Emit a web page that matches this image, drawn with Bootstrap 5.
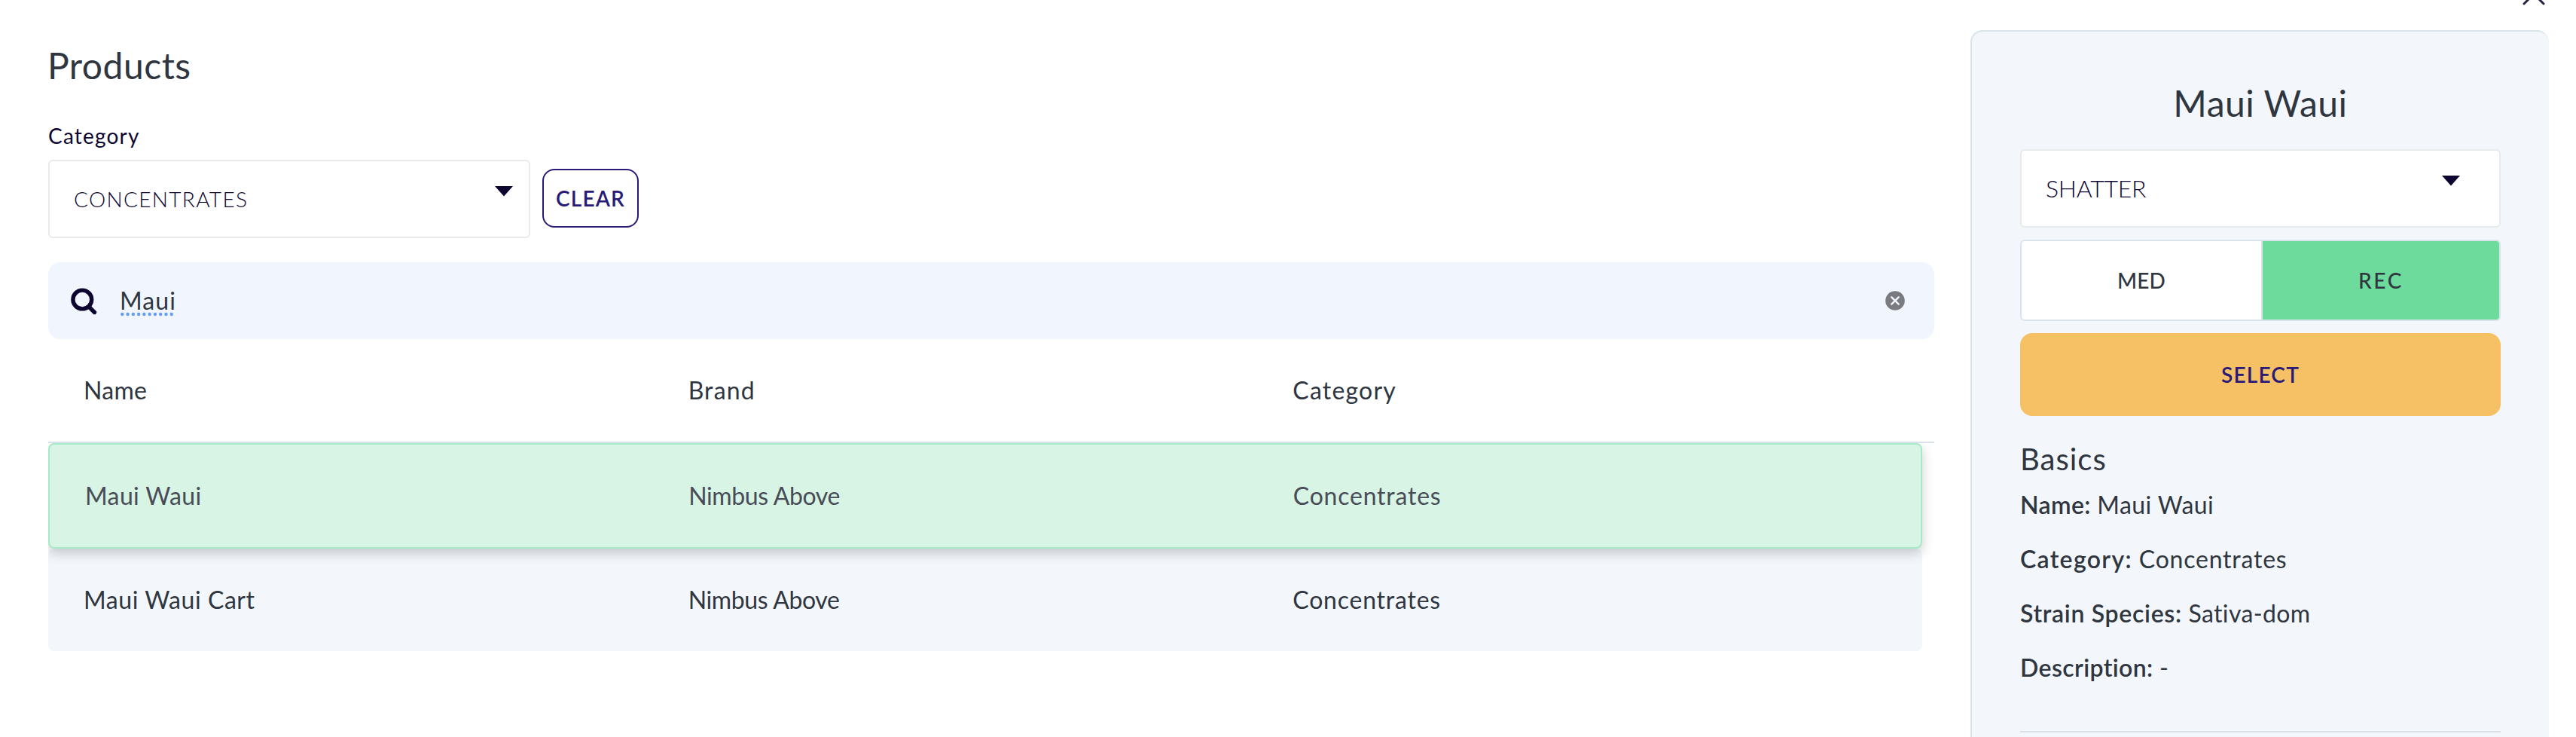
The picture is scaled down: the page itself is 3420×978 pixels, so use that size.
<!DOCTYPE html>
<html lang="en">
<head>
<meta charset="utf-8">
<title>Products</title>
<link href="https://cdn.jsdelivr.net/npm/bootstrap@5.3.0/dist/css/bootstrap.min.css" rel="stylesheet">
<style>
  body { font-family: Lato, sans-serif; font-size: 32px; color: #2f3640; background: #fff; height: 978px; overflow: hidden; }
  .page { padding: 0 36px 0 64px; gap: 48px; height: 978px; }
  .main-panel { width: 2504px; padding-top: 59px; }
  .panel-title { font-size: 48px; line-height: 56px; font-weight: 400; margin: 0 0 48px -1px; letter-spacing: .5px; }
  .field-label { font-size: 28px; line-height: 34px; letter-spacing: 1.2px; color: #0e0630; margin-bottom: 15px; display: block; }
  .picker { height: 104px; background: #fff; border: 2px solid #e8e9eb; border-radius: 6px; color: #0e0630; font-weight: 300; }
  .picker-cat { width: 640px; font-size: 28px; letter-spacing: 1.34px; padding: 0 21px 0 32px; }
  .picker-type { letter-spacing: -.27px; padding: 0 52px 0 32px; }
  .picker svg { margin-bottom: 20px; }
  .btn-clear { width: 128px; height: 78px; border: 2px solid #2a1a78; border-radius: 16px; color: #2a1a78; font-size: 28px; font-weight: 600; letter-spacing: 1.15px; line-height: 1; padding: 0; margin-bottom: 2px; }
  .search-bar { height: 102px; margin-top: 32px; border-radius: 16px; background: #f1f6fe; padding: 0 39px 0 28px; }
  .query { line-height: 42px; letter-spacing: 1.1px; margin-left: 25px; padding: 0 0 0 3px; margin-right: auto; position: relative; }
  .query svg { position: absolute; left: 4px; top: 36px; }
  .trow { display: grid; grid-template-columns: 802.67px 802.67px 1fr; align-items: center; padding: 0 47px; }
  .trow-head { height: 138px; border-bottom: 2px solid #d9e1e9; }
  .trow-item { width: 2488px; border-radius: 8px; }
  .trow-on { height: 140px; border: 2px solid #a6eac8; background: #d7f4e4; color: #484c57; box-shadow: 0 6px 16px rgba(0,0,0,.2); z-index: 1; position: relative; clip-path: inset(0 -30px -30px 0); }
  .trow-on > span + span { margin-left: -1.5px; }
  .trow-off { height: 136px; background: #f3f7fc; }
  .ls-name { letter-spacing: .27px; }
  .ls-brand { letter-spacing: 1.13px; }
  .ls-cat { letter-spacing: 1.21px; }
  .ls-maui { letter-spacing: .38px; }
  .ls-cart { letter-spacing: .56px; }
  .ls-nimbus { letter-spacing: -.35px; }
  .ls-conc { letter-spacing: .78px; }
  .ls-strain { letter-spacing: .69px; }
  .ls-catb { letter-spacing: 1.3px; }
  .detail { width: 768px; margin-top: 40px; height: 938px; background: #f3f7fc; border: 2px solid #dae2ea; border-right: 0; border-bottom: 0; border-radius: 16px 16px 0 0; padding: 67px 64px 0 64px; }
  .detail-title { font-size: 48px; line-height: 56px; font-weight: 400; letter-spacing: .5px; margin: 0 0 33px; }
  .toggle { height: 108px; margin-top: 16px; border: 2px solid #dae2ea; border-radius: 6px; background: #fff; overflow: hidden; font-size: 28px; font-weight: 500; }
  .toggle > div { display: flex; align-items: center; justify-content: center; }
  .t-med { width: 320px; border-right: 2px solid #dae2ea; letter-spacing: .2px; }
  .t-rec { background: #6ddb9b; letter-spacing: 2.6px; }
  .btn-pick { height: 110px; margin-top: 16px; border: 0; border-radius: 16px; background: #f6c164; color: #2a1a78; font-size: 28px; font-weight: 600; letter-spacing: 1.2px; line-height: 1; }
  .basics { font-size: 40px; line-height: 48px; font-weight: 400; letter-spacing: 1px; margin: 33px 0 1px; }
  .fact { line-height: 72px; margin: 0; }
  .fact b { font-weight: 600; }
  .rule { border-top: 2px solid #d9e1e9; margin-top: 48px; }
  .close-x { position: absolute; left: 3348px; top: -24px; }
</style>
</head>
<body>
<div class="page d-flex">
  <main class="main-panel flex-shrink-0">
    <h1 class="panel-title">Products</h1>
    <span class="field-label">Category</span>
    <div class="d-flex align-items-center gap-3">
      <div class="picker picker-cat d-flex align-items-center justify-content-between">CONCENTRATES
        <svg width="24" height="14" viewBox="0 0 24 14"><path d="M0 0h24L12 13.5z" fill="#0e0630"/></svg>
      </div>
      <button class="btn btn-clear">CLEAR</button>
    </div>
    <div class="search-bar d-flex align-items-center">
      <svg width="39" height="40" viewBox="0 0 39 40" fill="none" stroke="#0e0630"><circle cx="17.3" cy="18.5" r="12.4" stroke-width="5.4"/><path d="M26 28l7.5 7.5" stroke-width="5.4" stroke-linecap="round"/></svg>
      <span class="query">Maui<svg width="72" height="6"><path d="M2.3 3H71" stroke="#659cf8" stroke-width="4.4" stroke-linecap="round" stroke-dasharray="0 7.27"/></svg></span>
      <svg width="26" height="26" viewBox="0 0 26 26"><circle cx="13" cy="13" r="12.8" fill="#7a7b80"/><path d="M8.3 8.3l9.4 9.4M17.7 8.3l-9.4 9.4" stroke="#f1f6fe" stroke-width="2.4" stroke-linecap="round"/></svg>
    </div>
    <div class="trow trow-head"><span class="ls-name">Name</span><span class="ls-brand">Brand</span><span class="ls-cat">Category</span></div>
    <div class="trow trow-item trow-on"><span class="ls-maui">Maui Waui</span><span class="ls-nimbus">Nimbus Above</span><span class="ls-conc">Concentrates</span></div>
    <div class="trow trow-item trow-off"><span class="ls-cart">Maui Waui Cart</span><span class="ls-nimbus">Nimbus Above</span><span class="ls-conc">Concentrates</span></div>
  </main>
  <aside class="detail flex-shrink-0">
    <h2 class="detail-title text-center">Maui Waui</h2>
    <div class="picker picker-type d-flex align-items-center justify-content-between">SHATTER
      <svg width="24" height="14" viewBox="0 0 24 14"><path d="M0 0h24L12 13.5z" fill="#0e0630"/></svg>
    </div>
    <div class="toggle d-flex"><div class="t-med">MED</div><div class="t-rec flex-fill">REC</div></div>
    <button class="btn btn-pick w-100">SELECT</button>
    <h3 class="basics">Basics</h3>
    <p class="fact ls-maui"><b>Name:</b> Maui Waui</p>
    <p class="fact ls-conc"><b class="ls-catb">Category:</b> Concentrates</p>
    <p class="fact ls-maui"><b class="ls-strain">Strain Species:</b> Sativa-dom</p>
    <p class="fact ls-maui"><b>Description:</b> -</p>
    <div class="rule"></div>
  </aside>
</div>
<svg class="close-x" width="32" height="32" viewBox="0 0 32 32"><path d="M3 3l26 26M29 3L3 29" stroke="#2b2145" stroke-width="3" stroke-linecap="round"/></svg>
<script src="https://cdn.jsdelivr.net/npm/bootstrap@5.3.0/dist/js/bootstrap.bundle.min.js"></script>
</body>
</html>
